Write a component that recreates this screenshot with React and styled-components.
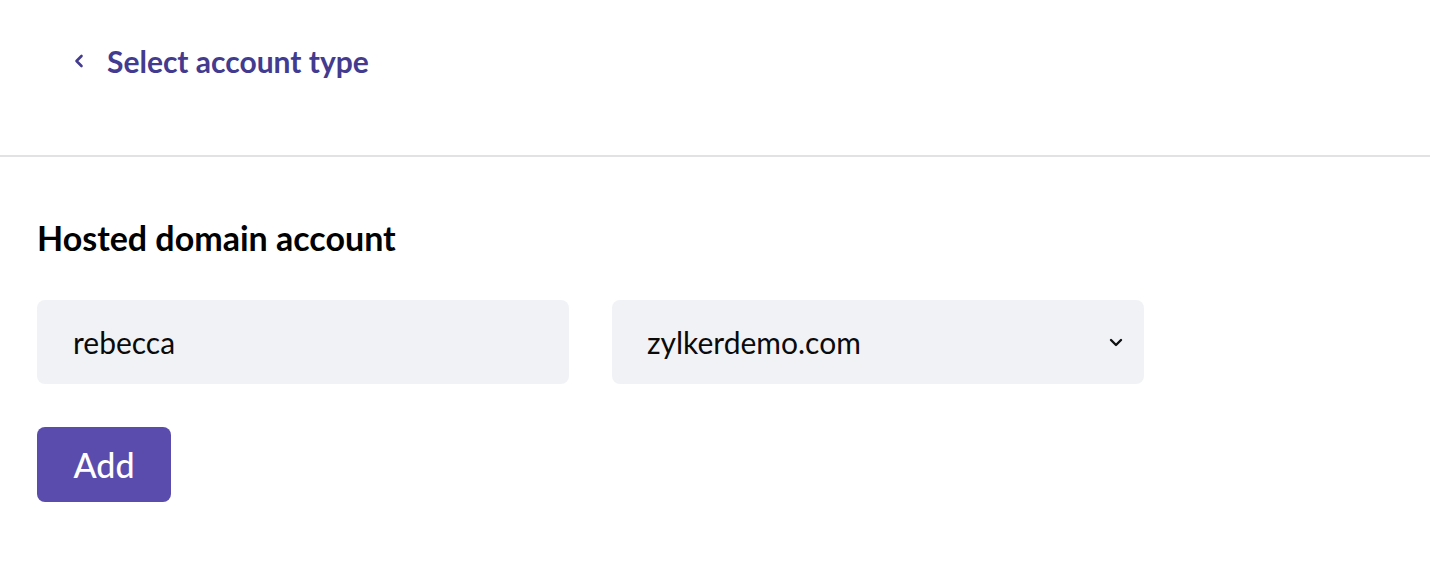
import styled, { createGlobalStyle } from "styled-components";

const Global = createGlobalStyle`
  body {
    margin: 0;
    background: #ffffff;
    font-family: Lato, "Open Sans", sans-serif;
  }
`;

const Page = styled.div`
  width: 1430px;
  height: 578px;
  background: #ffffff;
`;

const Header = styled.div`
  height: 157px;
  border-bottom: 2px solid #e2e2e4;
  box-sizing: border-box;
  display: flex;
  align-items: flex-start;
  padding: 43px 0 0 71px;
`;

const BackLink = styled.button`
  display: flex;
  align-items: center;
  gap: 20px;
  background: none;
  border: none;
  padding: 0;
  cursor: pointer;
  color: #433b8f;
  font-family: Lato, sans-serif;
  font-weight: 700;
  font-size: 30px;
`;

const Body = styled.div`
  padding: 60px 0 0 37px;
`;

const Title = styled.h2`
  margin: 0 0 41px;
  font-size: 34px;
  font-weight: 700;
  color: #000000;
  line-height: 42px;
`;

const Row = styled.div`
  display: flex;
  gap: 43px;
  margin-bottom: 43px;
`;

const Field = styled.div`
  width: 532px;
  height: 84px;
  background: #f1f2f6;
  border-radius: 8px;
  display: flex;
  align-items: center;
  padding: ${(p) => (p.$select ? "0 20px 0 35px" : "0 36px")};
  box-sizing: border-box;
  font-size: 30px;
  color: #0a0a0a;
`;

const Value = styled.span`
  flex: 1;
`;

const AddButton = styled.button`
  width: 134px;
  height: 75px;
  background: #5a4cad;
  color: #ffffff;
  border: none;
  border-radius: 8px;
  font-family: Lato, sans-serif;
  font-size: 34px;
  font-weight: 500;
  cursor: pointer;
`;

const Chevron = ({ dir }) => (
  <svg width="16" height="16" viewBox="0 0 16 16" fill="none">
    {dir === "left" ? (
      <path d="M10.5 3 L5.5 8 L10.5 13" stroke="#433b8f" strokeWidth="2.6" strokeLinecap="round" strokeLinejoin="round" />
    ) : (
      <path d="M3 6 L8 11 L13 6" stroke="#111" strokeWidth="2.4" strokeLinecap="round" strokeLinejoin="round" />
    )}
  </svg>
);

export default function App() {
  return (
    <Page>
      <Global />
      <Header>
        <BackLink>
          <Chevron dir="left" />
          Select account type
        </BackLink>
      </Header>
      <Body>
        <Title>Hosted domain account</Title>
        <Row>
          <Field>
            <Value>rebecca</Value>
          </Field>
          <Field $select>
            <Value>zylkerdemo.com</Value>
            <Chevron dir="down" />
          </Field>
        </Row>
        <AddButton>Add</AddButton>
      </Body>
    </Page>
  );
}
